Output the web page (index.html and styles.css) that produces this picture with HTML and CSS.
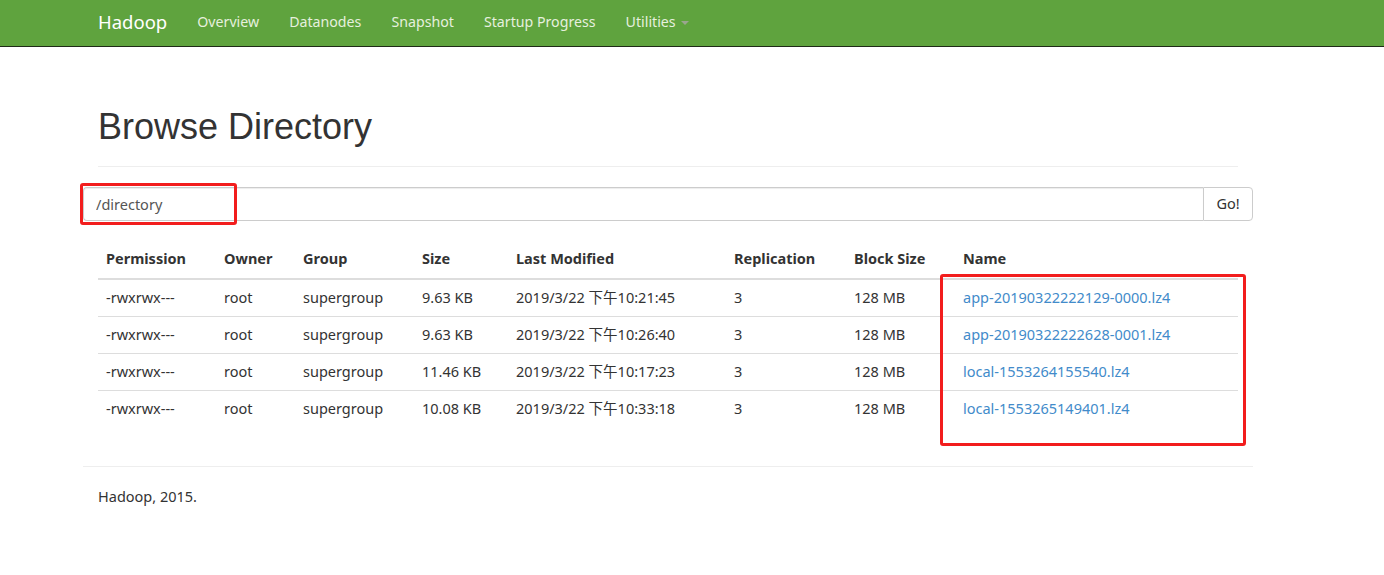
FILE: index.html
```html
<!DOCTYPE html>
<html>
<head>
<meta charset="utf-8">
<title>Browsing HDFS</title>
<link rel="stylesheet" href="styles.css">
</head>
<body>
<div class="page">
  <header class="navbar">
    <div class="nav-inner">
      <a class="brand" href="#">Hadoop</a>
      <ul class="nav">
        <li><a href="#">Overview</a></li>
        <li><a href="#">Datanodes</a></li>
        <li><a href="#">Snapshot</a></li>
        <li><a href="#">Startup Progress</a></li>
        <li><a href="#">Utilities<span class="caret"></span></a></li>
      </ul>
    </div>
  </header>

  <main class="container">
    <div class="page-header">
      <h1>Browse Directory</h1>
    </div>

    <form class="input-group">
      <input class="form-control" type="text" value="/directory">
      <button class="btn" type="button">Go!</button>
    </form>

    <table class="table">
      <colgroup>
        <col class="c1"><col class="c2"><col class="c3"><col class="c4">
        <col class="c5"><col class="c6"><col class="c7"><col class="c8">
      </colgroup>
      <thead>
        <tr>
          <th>Permission</th><th>Owner</th><th>Group</th><th>Size</th>
          <th>Last Modified</th><th>Replication</th><th>Block Size</th><th>Name</th>
        </tr>
      </thead>
      <tbody>
        <tr>
          <td>-rwxrwx---</td><td>root</td><td>supergroup</td><td>9.63 KB</td>
          <td>2019/3/22 下午10:21:45</td><td>3</td><td>128 MB</td>
          <td><a href="#">app-20190322222129-0000.lz4</a></td>
        </tr>
        <tr>
          <td>-rwxrwx---</td><td>root</td><td>supergroup</td><td>9.63 KB</td>
          <td>2019/3/22 下午10:26:40</td><td>3</td><td>128 MB</td>
          <td><a href="#">app-20190322222628-0001.lz4</a></td>
        </tr>
        <tr>
          <td>-rwxrwx---</td><td>root</td><td>supergroup</td><td>11.46 KB</td>
          <td>2019/3/22 下午10:17:23</td><td>3</td><td>128 MB</td>
          <td><a href="#">local-1553264155540.lz4</a></td>
        </tr>
        <tr>
          <td>-rwxrwx---</td><td>root</td><td>supergroup</td><td>10.08 KB</td>
          <td>2019/3/22 下午10:33:18</td><td>3</td><td>128 MB</td>
          <td><a href="#">local-1553265149401.lz4</a></td>
        </tr>
      </tbody>
    </table>

    <hr class="footer-rule">
    <footer class="footer">
      <p>Hadoop, 2015.</p>
    </footer>
  </main>

  <div class="mark mark-input"></div>
  <div class="mark mark-names"></div>
</div>
</body>
</html>
```

FILE: styles.css
```css
* { box-sizing: border-box; }

html, body {
  margin: 0;
  padding: 0;
  background: #fff;
}

body {
  font-family: "Noto Sans", "Noto Sans CJK SC", sans-serif;
  font-size: 14.5px;
  line-height: 20px;
  color: #333;
}

a { color: #428bca; text-decoration: none; }

.page { position: relative; min-height: 575px; }

/* Navbar */
.navbar {
  height: 47px;
  background: #5fa33e;
  border-bottom: 1px solid #1f2a18;
}

.nav-inner {
  margin-left: 83px;
  display: flex;
  align-items: center;
  height: 46px;
}

.brand {
  color: #fff;
  font-size: 18.5px;
  line-height: 20px;
  padding: 12px 15px 14px;
}

.nav {
  list-style: none;
  margin: 0;
  padding: 0;
  display: flex;
}

.nav a {
  display: flex;
  align-items: center;
  color: #e6f0de;
  font-size: 14.2px;
  padding: 12px 15px 14px;
  line-height: 20px;
}

.caret {
  display: inline-block;
  width: 0;
  height: 0;
  margin-left: 5px;
  margin-top: 2px;
  border-top: 4px solid #9aa58f;
  border-left: 4px solid transparent;
  border-right: 4px solid transparent;
}

/* Main */
.container {
  width: 1170px;
  margin-left: 83px;
}

.page-header {
  margin: 60px 15px 20px;
  padding-bottom: 9px;
  border-bottom: 1px solid #eee;
}

.page-header h1 {
  margin: 0 0 10px;
  font-family: "Liberation Sans", Arial, sans-serif;
  font-size: 36px;
  font-weight: normal;
  line-height: 39.6px;
  color: #333;
}

.input-group {
  display: flex;
  height: 34px;
  margin: 0 0 21px;
}

.form-control {
  flex: 1;
  height: 34px;
  padding: 6px 12px;
  font: inherit;
  color: #555;
  border: 1px solid #ccc;
  border-right: 0;
  border-radius: 4px 0 0 4px;
  box-shadow: inset 0 1px 1px rgba(0,0,0,.075);
  outline: none;
}

.btn {
  width: 50px;
  height: 34px;
  padding: 5px 0 7px;
  font: inherit;
  color: #333;
  background: #fff;
  border: 1px solid #ccc;
  border-radius: 0 4px 4px 0;
}

.table {
  width: 1140px;
  margin: 0 15px 20px;
  border-collapse: collapse;
  table-layout: fixed;
}

.c1 { width: 118px; }
.c2 { width: 79px; }
.c3 { width: 119px; }
.c4 { width: 94px; }
.c5 { width: 218px; }
.c6 { width: 120px; }
.c7 { width: 109px; }
.c8 { width: 283px; }

.table th, .table td {
  padding: 7px 8px 9px;
  line-height: 20px;
  text-align: left;
  white-space: nowrap;
}

.table th {
  font-weight: bold;
  padding-top: 6px;
  padding-bottom: 10px;
  border-bottom: 2px solid #ddd;
}

.table td {
  border-top: 1px solid #ddd;
}

.footer-rule {
  margin: 39px 0 0;
  border: 0;
  border-top: 1px solid #eee;
}

.footer p {
  margin: 19px 15px 10px;
}

/* Red annotation boxes drawn over the screenshot */
.mark {
  position: absolute;
  border: 3px solid #f21d1d;
  border-radius: 3px;
}

.mark-input {
  left: 80px;
  top: 183px;
  width: 157px;
  height: 42px;
}

.mark-names {
  left: 940px;
  top: 274px;
  width: 306px;
  height: 172px;
}
```
